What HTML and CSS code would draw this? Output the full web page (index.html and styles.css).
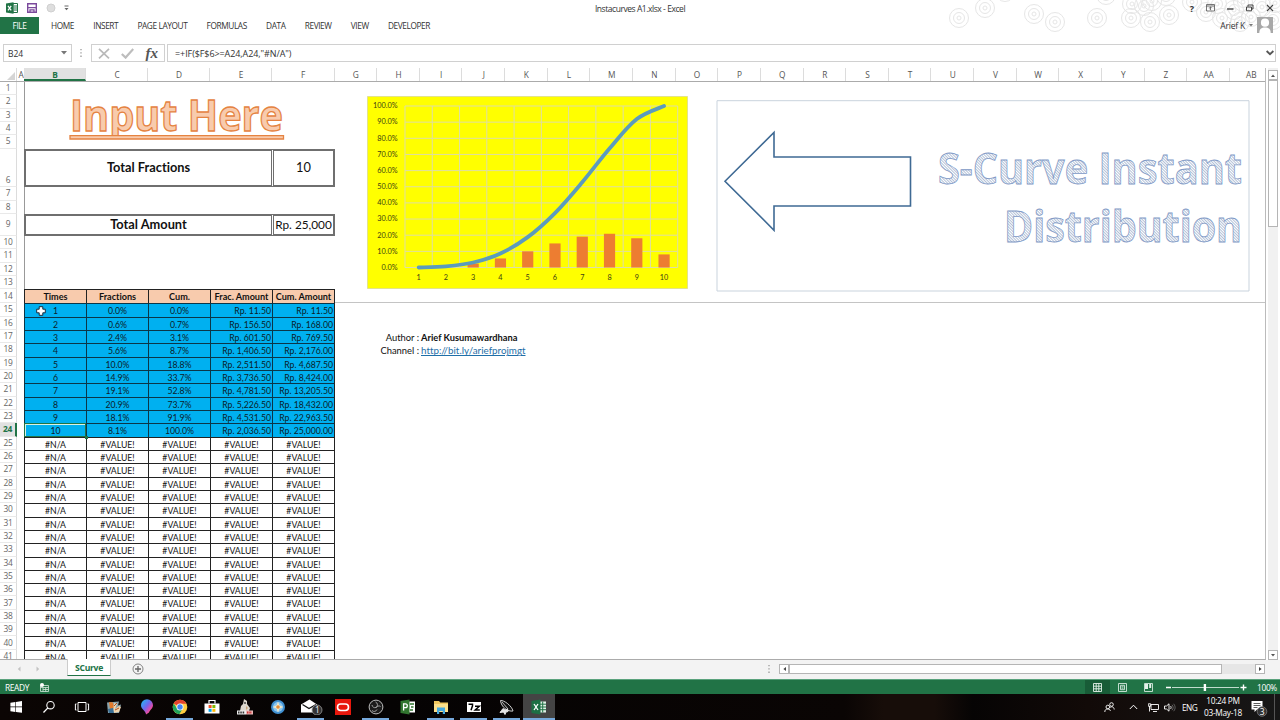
FILE: index.html
```html
<!DOCTYPE html>
<html lang="en">
<head>
    <meta charset="UTF-8">
    <title>Instacurves A1.xlsx - Excel</title>
    <link rel="stylesheet" href="styles.css">
</head>
<body>
<div class="excel">
    <svg class="rings" id="rings" width="340" height="44" viewBox="940 0 340 44"></svg>

    <div class="titlebar">
        <div class="quick">
            <svg width="12" height="12" viewBox="0 0 12 12"><path d="M7 1.5h4.5v9H7z" fill="#fff" stroke="#217346"/><path d="M8 4h3M8 6h3M8 8h3" stroke="#217346"/><path d="M0 1.5L7.5.3v11.4L0 10.5z" fill="#217346"/><path d="M2 3.8l3.2 4.6M5.2 3.8L2 8.4" stroke="#fff" stroke-width="1.2"/></svg>
            <svg width="10" height="10" viewBox="0 0 10 10"><path d="M.7.7h8.6v8.6H.7z" fill="#fff" stroke="#7b4a9c" stroke-width="1.4"/><path d="M.7 4.6h8.6M3 9V6.8h4V9" fill="none" stroke="#7b4a9c" stroke-width="1.3"/></svg>
            <svg width="10" height="10" viewBox="0 0 10 10"><circle cx="5" cy="5" r="4" fill="#dedede" stroke="#d0d0d0"/></svg>
            <svg width="5" height="6" viewBox="0 0 5 6"><path d="M.5 1h4" stroke="#666"/><path d="M.5 3h4L2.5 5.2z" fill="#666"/></svg>
        </div>
        <div class="title">Instacurves A1.xlsx - Excel</div>
        <div class="winbtns">
            <span class="help">?</span>
            <svg width="9" height="8" viewBox="0 0 9 8"><path d="M.5.5h8v6.5h-8zM.5 2h8M4.5 6V3M3.2 4.2l1.3-1.3 1.3 1.3" fill="none" stroke="#555" stroke-width=".8"/></svg>
            <svg width="7" height="8" viewBox="0 0 7 8"><path d="M0 5h6.5" stroke="#444" stroke-width="1.4"/></svg>
            <svg width="8" height="8" viewBox="0 0 8 8"><path d="M.5 3h5v3.8h-5zM2 2.6V1h5v4H6" fill="none" stroke="#444" stroke-width="1"/></svg>
            <svg width="8" height="8" viewBox="0 0 8 8"><path d="M1 1l6 6M7 1L1 7" stroke="#444" stroke-width="1.2"/></svg>
        </div>
    </div>

    <div class="ribbon">
        <span class="file">FILE</span>
        <span class="tab">HOME</span>
        <span class="tab">INSERT</span>
        <span class="tab">PAGE LAYOUT</span>
        <span class="tab">FORMULAS</span>
        <span class="tab">DATA</span>
        <span class="tab">REVIEW</span>
        <span class="tab">VIEW</span>
        <span class="tab">DEVELOPER</span>
        <div class="user">
            <span>Arief K</span>
            <svg width="4" height="3" viewBox="0 0 4 3"><path d="M0 0h4L2 2.5z" fill="#777"/></svg>
            <svg class="avatar" width="16" height="16" viewBox="0 0 16 16"><path d="M0 0h16v16H0z" fill="#a8a8a8"/><circle cx="8" cy="5.7" r="4.1" fill="#fff"/><path d="M2.3 16c0-4 2-5.6 5.7-5.6s5.7 1.6 5.7 5.6z" fill="#fff"/></svg>
        </div>
    </div>

    <div class="formulabar">
        <div class="namebox">B24<svg width="6" height="4" viewBox="0 0 6 4"><path d="M0 0h6L3 3.6z" fill="#777"/></svg></div>
        <svg class="dots" width="2" height="8" viewBox="0 0 2 8"><path d="M1 0v8" stroke="#999" stroke-width="1.3" stroke-dasharray="1.3 2"/></svg>
        <div class="fbtns">
            <svg width="12" height="11" viewBox="0 0 12 11"><path d="M1 .8l10 9.5M11 .8L1 10.3" stroke="#b9b9b9" stroke-width="1.7"/></svg>
            <svg width="13" height="11" viewBox="0 0 13 11"><path d="M.8 6l3.8 3.6L12.3 1" fill="none" stroke="#bdbdbd" stroke-width="2.2"/></svg>
            <span class="fx">fx</span>
        </div>
        <div class="formula"><span>=+IF($F$6&gt;=A24,A24,"#N/A")</span><svg width="8" height="6" viewBox="0 0 8 6"><path d="M.6 1L4 4.2 7.4 1" fill="none" stroke="#555" stroke-width="1.9"/></svg></div>
    </div>

    <div class="workarea">
        <div class="sheet">
            <div class="colheads" id="colheads"></div>
            <div class="cells" id="cells">
                <svg class="wordart" width="225" height="50" viewBox="65 94 225 50">
                    <clipPath id="above"><path d="M65 94h225v44H65z"/></clipPath>
                    <text x="70" y="131" textLength="213" lengthAdjust="spacingAndGlyphs" clip-path="url(#above)">Input Here</text>
                    <path d="M70 135.700h213.500v3.300H70z"/>
                </svg>
                <svg class="chart" id="chart" width="321" height="193" viewBox="367 96 321 193"></svg>
                <svg class="banner" width="534" height="192" viewBox="716 100 534 192">
                    <defs>
                        <pattern id="hatch" width="2" height="2" patternUnits="userSpaceOnUse" patternTransform="rotate(-45)">
                            <path d="M0 0h2v2H0z" fill="#fff"/>
                            <path d="M.5 0v2" stroke="#b4c2d8" stroke-width="1"/>
                        </pattern>
                    </defs>
                    <path d="M717 100.7h532V291H717z" fill="#fff" stroke="#c9d3dd"/>
                    <path d="M725 181.300L774 132.500V157H910.500V206H774V230.200z" fill="#fff" stroke="#3f6a94" stroke-width="1.6"/>
                    <text x="938" y="183.5" textLength="304" lengthAdjust="spacingAndGlyphs">S-Curve Instant</text>
                    <text x="1004" y="241.7" textLength="238" lengthAdjust="spacingAndGlyphs">Distribution</text>
                </svg>
                <svg class="cursor" width="10" height="10" viewBox="0 0 10 10"><path d="M3.200.7h3.600v2.500h2.500v3.600H6.800v2.500H3.200V6.800H.7V3.200h2.500z" fill="#fff" stroke="#1b2b3b" stroke-width="1"/></svg>
            </div>
        </div>
        <div class="vscroll">
            <div class="arrow"><svg width="4" height="3" viewBox="0 0 4 3"><path d="M0 3h4L2 .4z" fill="#555"/></svg></div>
            <div class="thumb"></div>
            <div class="arrow"><svg width="4" height="3" viewBox="0 0 4 3"><path d="M0 0h4L2 2.6z" fill="#555"/></svg></div>
        </div>
    </div>

    <div class="sheetbar">
        <svg class="nav" width="24" height="6" viewBox="0 0 24 6"><path d="M3.5.5L.8 3l2.700 2.500zM19.500.5L22.200 3l-2.700 2.500z" fill="#c3c3c3"/></svg>
        <span class="sheettab">SCurve</span>
        <svg class="add" width="12" height="12" viewBox="0 0 12 12"><circle cx="6" cy="6" r="5" fill="none" stroke="#777" stroke-width=".9"/><path d="M3 6h6M6 3v6" stroke="#666" stroke-width="1.3"/></svg>
        <svg class="dots" width="2" height="8" viewBox="0 0 2 8"><path d="M1 0v8" stroke="#999" stroke-width="1.3" stroke-dasharray="1.3 2"/></svg>
        <div class="hscroll">
            <div class="arrow"><svg width="3" height="4" viewBox="0 0 3 4"><path d="M3 0v4L.4 2z" fill="#444"/></svg></div>
            <div class="thumb"></div>
            <div class="arrow"><svg width="3" height="4" viewBox="0 0 3 4"><path d="M0 0v4l2.600-2z" fill="#444"/></svg></div>
        </div>
    </div>

    <div class="statusbar">
        <span class="ready">READY</span>
        <svg width="9" height="9" viewBox="0 0 9 9"><path d="M.5 2.5h8v6h-8zM.5 4.5h8M3 4.5v4M5.7 4.5v4M3 6.5h5.500" fill="none" stroke="#d6e8dd" stroke-width=".8"/><circle cx="2" cy="2" r="2" fill="#fff"/></svg>
        <div class="views">
            <span class="on"><svg width="9" height="9" viewBox="0 0 9 9"><path d="M.5.5h8v8h-8zM3.2.5v8M5.8.5v8M.5 3.2h8M.5 5.8h8" fill="none" stroke="#e4f0e9" stroke-width=".9"/></svg></span>
            <span><svg width="9" height="9" viewBox="0 0 9 9"><path d="M.5.5h8v8h-8zM2.5 2.3h4v4.400h-4zM3.500 3.800h2M3.500 5.200h2" fill="none" stroke="#d4e6dc" stroke-width=".9"/></svg></span>
            <span><svg width="9" height="9" viewBox="0 0 9 9"><path d="M.5.5h8v8h-8z" fill="none" stroke="#d4e6dc" stroke-width=".9"/><path d="M1 1h3v5H1zM5.2 1h2v4h-2z" fill="#e4f0e9"/></svg></span>
        </div>
        <svg class="zoom" width="82" height="9" viewBox="0 0 82 9"><path d="M0 4.5h5M74.5 4.5h6M77.5 1.5v6" stroke="#fff" stroke-width="1.4"/><path d="M6 4.5h67" stroke="#d4e6dc" stroke-width=".9"/><path d="M37.700 1h2.400v7h-2.400z" fill="#fff"/></svg>
        <span class="pct">100%</span>
    </div>
</div>

<div class="taskbar">
    <ul class="apps">
        <li><svg viewBox="0 0 16 16"><path d="M2.4 3.7l5-.7v4.600h-5zM8 2.900l6-.8v5.500H8zM2.400 8.300h5v4.600l-5-.7zM8 8.300h6v5.500l-6-.8z" fill="#fff"/></svg></li>
        <li><svg viewBox="0 0 16 16"><circle cx="9.5" cy="6.2" r="3.7" fill="none" stroke="#fff" stroke-width="1.1"/><path d="M6.9 8.900l-4.400 4.600" stroke="#fff" stroke-width="1.3"/></svg></li>
        <li><svg viewBox="0 0 16 16"><path d="M4 3.5h8v9H4zM2.500 5H1.400v6h1.100M13.500 5h1.100v6h-1.100" fill="none" stroke="#fff"/></svg></li>
        <li><svg viewBox="0 0 16 16"><path d="M1 3.5l12-1-1 4 3-1-2 8.500H2z" fill="#8aa4ad"/><path d="M3 3l4 .5 1 5.500-4 1z" fill="#e27a2c"/><path d="M8 4l3 1-2 5 4-3 2 1-2 5-6 1z" fill="#f0d5ae"/><path d="M2 10l5-1 1 5H3z" fill="#3a6f95"/><path d="M8 7l3-3M9 11l4-2" stroke="#b14b1c"/></svg></li>
        <li><svg viewBox="0 0 16 16"><defs><linearGradient id="balloon" x1="0" y1="0" x2="1" y2="1"><stop offset="0" stop-color="#18c5f4"/><stop offset=".45" stop-color="#6e67ee"/><stop offset=".7" stop-color="#e04ba8"/><stop offset="1" stop-color="#ffa23e"/></linearGradient></defs><path d="M8 .3a6 6 0 0 1 6 6c0 3-3 4.600-4 7.200L7 15.500C7 12 2 10.500 2 6.300a6 6 0 0 1 6-6z" fill="url(#balloon)"/></svg></li>
        <li class="open"><svg viewBox="0 0 16 16"><circle cx="8" cy="8" r="7.3" fill="#ffcd40"/><path d="M8 8L1.7 4.400A7.300 7.300 0 0 1 14.400 4.700H8z" fill="#e3412f"/><path d="M1.7 4.400A7.300 7.300 0 0 0 7.300 15.300L10.800 9.600 5.100 9.600z" fill="#20a35b"/><circle cx="8" cy="8" r="3.5" fill="#fff"/><circle cx="8" cy="8" r="2.7" fill="#4487f3"/></svg></li>
        <li><svg viewBox="0 0 16 16"><path d="M.5 4.5h15v10H.5z" fill="#fff"/><path d="M5 4.5V1.5h6v3" fill="none" stroke="#fff" stroke-width="1.2"/><path d="M4.6 6h3v3h-3z" fill="#f25022"/><path d="M8.4 6h3v3h-3z" fill="#7fba00"/><path d="M4.6 9.800h3v3h-3z" fill="#00a4ef"/><path d="M8.4 9.800h3v3h-3z" fill="#ffb900"/></svg></li>
        <li><svg viewBox="0 0 16 16"><path d="M7 0l3 2v3l3 4-1 3H3l1-5 2-2z" fill="#ddd8cf"/><circle cx="8" cy="4" r="1" fill="#444"/><path d="M9 7l2 2-2 2z" fill="#c9a37a"/><path d="M0 11.5h9v4H0z" fill="#eee"/><path d="M9 11.5h7v4H9z" fill="#e9b9b9"/><path d="M1 13.5h7" stroke="#333" stroke-dasharray="1.5 .8" stroke-width="2"/><path d="M10 13.5h5" stroke="#c33" stroke-dasharray="1.5 .8" stroke-width="2"/></svg></li>
        <li><svg viewBox="0 0 16 16"><circle cx="8" cy="8" r="7" fill="#3f8fd0"/><circle cx="8" cy="8" r="5" fill="#8cc6ee"/><path d="M8 2.5l1.300 3.700 4 1.800-4 1.800L8 13.500 6.700 9.800l-4-1.800 4-1.800z" fill="#f4e7c3"/><circle cx="8" cy="8" r="1.8" fill="#e08a3a"/></svg></li>
        <li class="open"><svg class="mail" viewBox="0 0 22 16"><path d="M0 5.5L8.500.5 16 5.500v8H0z" fill="#fff"/><path d="M1.5 5.500L8 9.500l7-4" fill="none" stroke="#111" stroke-width="1.3"/><circle cx="16" cy="11" r="5" fill="#333" stroke="#999" stroke-width=".8"/><text x="14" y="14" class="badge">1</text></svg></li>
        <li><svg viewBox="0 0 16 16"><path d="M0 0h16v16H0z" fill="#e8170c"/><rect x="2.5" y="5" width="11" height="6.5" rx="3.2" fill="none" stroke="#fff" stroke-width="1.6"/></svg></li>
        <li class="open"><svg viewBox="0 0 16 16"><circle cx="8" cy="8" r="6.9" fill="#1c1c1c" stroke="#bbb"/><path d="M7.5 3a3 3 0 0 1 1 5M12.600 7.500a3 3 0 0 0-4.600 1.500M4 11.500a3 3 0 0 0 5-1M4 6a3 3 0 0 0 4 2.500" fill="none" stroke="#aaa" stroke-width=".9"/></svg></li>
        <li><svg viewBox="0 0 16 16"><path d="M8 2.5h7v11H8z" fill="#fff"/><path d="M10 5h4M11 8h2.500M10 11h3" stroke="#31752f" stroke-width="1.3"/><path d="M.5 2L9.500.6v14.800L.5 14z" fill="#31752f"/><path d="M3.6 11.500V4.800h1.800a1.900 1.900 0 0 1 0 3.800H3.600" fill="none" stroke="#fff" stroke-width="1.3"/></svg></li>
        <li class="open"><svg viewBox="0 0 16 16"><path d="M1 2h5l1.300 1.500H15V13H1z" fill="#f0c75e"/><path d="M1 5h14v8H1z" fill="#fbe08c"/><path d="M4 8.500h8V15H9.800v-3H6.200v3H4z" fill="#45a9e0"/></svg></li>
        <li class="open"><svg viewBox="0 0 16 16"><path d="M1 3h14v10H1z" fill="#fff"/><path d="M2.5 5.300h4v1.500L5 11.300M9 7.300h4.300L9.200 11h4.600" fill="none" stroke="#000" stroke-width="1.5"/></svg></li>
        <li class="open"><svg viewBox="0 0 16 16"><path d="M2.5 1.500C6 1 14 7 15 12c-5 1-12-4-12.500-10.500z" fill="#111" stroke="#ccc"/><path d="M4 3l6 7" stroke="#bbb"/><path d="M5 9.500l2 1.500 2.500-1 .5 2.500-2 .5L7 15.500 5.500 13 2 13.500l1.500-2z" fill="#e6e6e6" stroke="#e6e6e6"/></svg></li>
        <li class="open active"><svg viewBox="0 0 16 16"><path d="M8 2.500h7v11H8z" fill="#dff0e6"/><path d="M8 5.200h7M8 8h7M8 10.700h7M11.700 2.500v11" stroke="#217346"/><path d="M.5 2L9.500.6v14.800L.5 14z" fill="#1d7044"/><path d="M3 5l4 6M7 5l-4 6" stroke="#fff" stroke-width="1.3"/></svg></li>
    </ul>
    <div class="tray">
        <svg width="11" height="11" viewBox="0 0 11 11"><circle cx="7.5" cy="2.5" r="1.8" fill="none" stroke="#fff" stroke-width=".9"/><circle cx="3.8" cy="5" r="1.8" fill="none" stroke="#fff" stroke-width=".9"/><path d="M.8 10c0-2 1-3 3-3s2.500 1 2.500 2M6 5.500c2-1.500 4-.5 4.200 2" fill="none" stroke="#fff" stroke-width=".9"/></svg>
        <svg class="up" width="9" height="6" viewBox="0 0 9 6"><path d="M.8 5L4.500 1.200 8.200 5" fill="none" stroke="#fff"/></svg>
        <svg width="11" height="9" viewBox="0 0 11 9"><path d="M3 1.500h7.500v5H3zM5 8.500h4M1.500 3v5.500M.3.8h2.400v2.400H.3z" fill="none" stroke="#fff" stroke-width=".9"/></svg>
        <svg class="sound" width="12" height="9" viewBox="0 0 12 9"><path d="M.5 3h2L5 .8v7.400L2.500 6h-2z" fill="none" stroke="#fff" stroke-width=".9"/><path d="M6.500 3c.8 1 .8 2 0 3" fill="none" stroke="#fff" stroke-width=".9"/><path d="M8 1.800c1.500 1.800 1.500 3.600 0 5.400M9.600.8c2 2.500 2 4.900 0 7.400" fill="none" stroke="#777" stroke-width=".8"/></svg>
        <span class="lang">ENG</span>
        <div class="clock">10:24 PM<br>03-May-18</div>
        <svg class="notes" width="17" height="17" viewBox="0 0 17 17"><path d="M.5 1h11v8.500H6L3.500 12V9.500h-3z" fill="#fff"/><path d="M2.5 3.500h7M2.500 5.500h7M2.500 7.500h4" stroke="#333" stroke-width=".8"/><circle cx="11" cy="11.500" r="4.800" fill="#333" stroke="#888" stroke-width=".7"/><text x="8.800" y="14.500" class="badge">3</text></svg>
    </div>
</div>
<script src="script.js"></script>
</body>
</html>
```
FILE: styles.css
```css
* {
    padding: 0;
    margin: 0;
    box-sizing: border-box;
    list-style: none;
}

body {
    width: 1280px;
    height: 720px;
    overflow: hidden;
    display: flex;
    flex-direction: column;
    background: #fff;
    font-family: "Open Sans", "Noto Sans", sans-serif;
    font-size: 8.5px;
    font-variant-ligatures: none;
    color: #333;
}

svg {
    display: block;
    flex: none;
}

.excel {
    position: relative;
    height: 694px;
    display: flex;
    flex-direction: column;
}

.rings {
    position: absolute;
    right: 0;
    top: 0;
}

.rings circle {
    fill: none;
    stroke: #e6e6e6;
}

/* title bar */
.titlebar {
    position: relative;
    height: 16px;
    display: grid;
    grid-template-columns: 1fr auto 1fr;
    align-items: center;
}

.quick {
    display: flex;
    align-items: center;
    gap: 9px;
    padding-left: 6px;
}

.quick svg:last-child {
    margin-left: -1px;
}

.title {
    font-size: 8.5px;
    letter-spacing: -0.45px;
    white-space: nowrap;
}

.winbtns {
    display: flex;
    justify-content: flex-end;
    align-items: center;
    gap: 12px;
    padding-right: 6px;
}

.help {
    font-weight: bold;
    font-size: 9px;
}

/* ribbon */
.ribbon {
    position: relative;
    height: 18px;
    display: flex;
    align-items: center;
    font-size: 8.3px;
    letter-spacing: -0.4px;
}

.file {
    width: 39px;
    height: 17px;
    line-height: 17px;
    text-align: center;
    background: #217346;
    color: #fff;
    margin-right: 12px;
}

.tab {
    margin-right: 19.2px;
}

.user {
    margin-left: auto;
    display: flex;
    align-items: center;
    gap: 4px;
    padding-right: 7px;
    font-size: 8.5px;
    letter-spacing: -0.2px;
}

/* formula bar */
.formulabar {
    height: 34px;
    padding: 10px 4px 6px 3px;
    display: flex;
    align-items: center;
    background: #fff;
}

.namebox,
.fbtns,
.formula {
    height: 18px;
    border: 1px solid #d0d0d0;
    display: flex;
    align-items: center;
    background: #fff;
}

.namebox {
    width: 69px;
    padding: 0 4px;
    justify-content: space-between;
    font-size: 8.5px;
}

.formulabar .dots {
    margin: 0 9px 0 8px;
}

.fbtns {
    width: 74px;
    padding: 0 6px;
    justify-content: space-between;
}

.fx {
    font-family: "Liberation Serif", serif;
    font-style: italic;
    font-weight: bold;
    font-size: 15px;
    line-height: 16px;
    color: #555;
}

.formula {
    flex: 1;
    margin-left: 2px;
    padding: 0 1px 0 7px;
    justify-content: space-between;
    font-size: 9px;
    letter-spacing: -0.08px;
}

/* sheet */
.workarea {
    height: 592px;
    display: flex;
}

.sheet {
    width: 1266px;
    overflow: hidden;
    border-right: 1px solid #bbb;
    border-bottom: 1px solid #ababab;
}

.colheads {
    height: 14px;
    display: flex;
    border-bottom: 1px solid #ababab;
    line-height: 14px;
    text-align: center;
    color: #555;
    font-size: 8.3px;
}

.colheads div {
    flex: none;
    width: 42.65px;
    padding-left: 1px;
    border-right: 1px solid #dcdcdc;
}

.colheads .corner {
    width: 17px;
    padding: 4px 0 0 7px;
}

.colheads .a {
    width: 7px;
    border: 0;
}

.colheads .wide {
    width: 62px;
}

.colheads .f {
    width: 62.5px;
}

.colheads .on {
    background: #e1e1e1;
    color: #217346;
    font-weight: bold;
    border-bottom: 2px solid #217346;
}

.cells {
    position: relative;
    font-family: Lato, "Open Sans", sans-serif;
    font-size: 8.7px;
    color: #111;
}

.row {
    height: 13.333px;
    line-height: 13px;
    display: flex;
    white-space: nowrap;
}

.row > div {
    flex: none;
    width: 62px;
}

.row > .rowhead {
    width: 17px;
    line-height: 12.2px;
    font-family: "Open Sans", sans-serif;
    font-size: 8.4px;
    letter-spacing: -0.2px;
    color: #666;
    border-right: 1px solid #dcdcdc;
    border-bottom: 1px solid #e9e9e9;
    display: flex;
    align-items: flex-end;
    justify-content: center;
}

.row > .a {
    width: 7px;
}

.row.frozen > .a {
    width: 8px;
    border-right: 1px solid #999;
}

.row.r6 {
    height: 38.667px;
}

.row.r9 {
    height: 22px;
}

.row.r14 {
    height: 14px;
}

.row.r9 .rowhead {
    align-items: center;
}

.row > .label,
.row > .input {
    display: flex;
    align-items: center;
    justify-content: center;
    border: 2px solid #6f6f6f;
}

.row > .label {
    width: 250px;
    margin-left: -1px;
    border-right: 3px double #6f6f6f;
    font-weight: bold;
    font-size: 12.8px;
}

.row > .input {
    width: 61px;
    border-left: 0;
    font-size: 12.8px;
}

.r9 > .input {
    font-size: 11.8px;
}

.row > .cell {
    border-left: 1px solid #222;
    border-top: 1px solid #222;
    text-align: center;
}

.row > .cell.last {
    width: 63px;
    border-right: 1px solid #222;
}

.r14 > .cell {
    background: #f8cbad;
    font-weight: bold;
    font-size: 9.1px;
}

.filled > .cell {
    background: #00b0f0;
    border-color: #0b3648;
    color: #0c2029;
}

.filled > .money {
    text-align: right;
    padding-right: 1px;
}

.row.r24 > .rowhead {
    background: #e1e1e1;
    color: #217346;
    font-weight: bold;
    border-right: 2px solid #217346;
}

.r24 > .cell:nth-child(3) {
    position: relative;
    box-shadow: inset 0 0 0 1px #d8f2e4;
    outline: 1px solid #217346;
    outline-offset: -1px;
}

.r24 > .cell:nth-child(3)::after {
    content: "";
    position: absolute;
    right: -2px;
    bottom: -2px;
    width: 3px;
    height: 3px;
    background: #217346;
}

.row.r14::after {
    content: "";
    flex: 1;
    border-bottom: 1px solid #c4c4c4;
}

.row > .who {
    width: 84px;
    text-align: right;
    font-size: 9.4px;
    line-height: 15px;
}

.row > .value {
    width: auto;
    margin-left: 2px;
    font-weight: bold;
    font-size: 9.3px;
    line-height: 15px;
}

.row > .link {
    font-weight: normal;
    font-size: 9.8px;
    text-decoration: underline;
    color: #1f6fa8;
}

/* drawings floating over the cells */
.wordart {
    position: absolute;
    left: 65px;
    top: 12px;
}

.wordart text,
.banner text {
    font: bold 43px "Open Sans", sans-serif;
}

.wordart text,
.wordart path {
    fill: #f8cbad;
    stroke: #e58341;
    stroke-width: 1.3;
}

.chart {
    position: absolute;
    left: 367px;
    top: 14px;
}

.chart text {
    font-size: 7.3px;
    fill: #3c3c14;
}

.banner {
    position: absolute;
    left: 716px;
    top: 18px;
}

.banner text {
    fill: url(#hatch);
    stroke: #8099c6;
    stroke-width: 0.8;
}

.cursor {
    position: absolute;
    left: 36px;
    top: 224px;
}

/* scrollbars */
.vscroll {
    width: 10px;
    margin-left: 2px;
    padding-top: 2px;
    display: flex;
    flex-direction: column;
    background: #f1f1f1;
}

.arrow {
    width: 10px;
    height: 10px;
    flex: none;
    border: 1px solid #b5b5b5;
    background: #fff;
    display: flex;
    align-items: center;
    justify-content: center;
}

.thumb {
    border: 1px solid #b5b5b5;
    background: #fff;
}

.vscroll .thumb {
    height: 147px;
    margin-bottom: auto;
}

.sheetbar {
    height: 19px;
    display: flex;
    background: #f3f3f3;
}

.nav {
    margin: 6px 0 0 17px;
}

.sheettab {
    position: relative;
    width: 44px;
    height: 17px;
    margin: -1px 0 0 26px;
    line-height: 19px;
    text-align: center;
    background: #fff;
    border-bottom: 1px solid #217346;
    border-left: 1px solid #ccc;
    border-right: 1px solid #ccc;
    font-weight: bold;
    font-size: 8.6px;
    letter-spacing: -0.3px;
    color: #217346;
}

.add {
    margin: 3px 0 0 21px;
}

.sheetbar .dots {
    margin: 5px 9px 0 auto;
}

.hscroll {
    width: 486px;
    height: 10px;
    margin: 4px 15px 0 0;
    display: flex;
    background: #e6e6e6;
}

.hscroll .thumb {
    width: 433px;
    margin-right: auto;
}

/* status bar */
.statusbar {
    height: 15px;
    padding: 0 5px;
    display: flex;
    align-items: center;
    background: #217346;
    border-top: 1px solid #5aa27c;
    color: #fff;
    font-size: 8.4px;
    letter-spacing: -0.35px;
}

.ready {
    width: 35px;
}

.views {
    margin-left: auto;
    display: flex;
}

.views span {
    width: 25.5px;
    height: 14px;
    display: flex;
    align-items: center;
    justify-content: center;
}

.views .on {
    background: #185c37;
}

.zoom {
    margin: 0 9px 0 5px;
}

.pct {
    width: 18px;
}

/* taskbar */
.taskbar {
    height: 26px;
    display: flex;
    justify-content: space-between;
    color: #fff;
    background: linear-gradient(90deg, #0b0504, #050303 30%, #0a0504 66%, #170d09 69%, #170d09 73%, #060404 76%, #120a08 85%, #171717);
}

.apps {
    display: flex;
}

.apps li {
    width: 32.66px;
    height: 26px;
    padding-top: 4.5px;
    display: flex;
    justify-content: center;
}

.apps svg {
    width: 16px;
    height: 16px;
}

.apps .mail {
    width: 22px;
    margin-left: 3px;
}

.apps .open {
    background: linear-gradient(#76a9dc, #76a9dc) center bottom / 27px 2px no-repeat;
}

.apps .active {
    background: linear-gradient(#76a9dc, #76a9dc) center bottom / 32px 2px no-repeat #444;
}

.badge {
    font: 8.4px "Open Sans", sans-serif;
    fill: #fff;
}

.tray {
    display: flex;
    align-items: center;
    padding-right: 5px;
}

.tray .up {
    margin: 0 10px 0 14px;
}

.tray .sound {
    margin-left: 5px;
}

.lang {
    width: 15px;
    margin-left: 6px;
    font-size: 8.3px;
    letter-spacing: -0.5px;
}

.clock {
    width: 46px;
    margin-left: 3px;
    text-align: center;
    font-size: 8.3px;
    line-height: 12px;
    letter-spacing: -0.3px;
    white-space: nowrap;
}

.notes {
    margin: 2px 6px 0 5px;
}

.tray::after {
    content: "";
    width: 1px;
    height: 26px;
    background: #555;
}
```
FILE: script.js
```js
// column headers
var colheads = document.getElementById('colheads');
var cols = ['', 'A', 'B', 'C', 'D', 'E', 'F', 'G', 'H', 'I', 'J', 'K', 'L', 'M', 'N', 'O', 'P', 'Q', 'R', 'S', 'T', 'U', 'V', 'W', 'X', 'Y', 'Z', 'AA', 'AB'];
for (var i = 0; i < cols.length; i++) {
    var head = document.createElement('div');
    head.innerText = cols[i];
    if (i == 0) {
        head.className = 'corner';
        head.innerHTML = '<svg width="8" height="8" viewBox="0 0 8 8"><path d="M8 0v8H0z" fill="#d5d5d5"/></svg>';
    } else if (i == 1) {
        head.className = 'a';
    } else if (i == 6) {
        head.className = 'f';
    } else if (i < 6) {
        head.className = i == 2 ? 'wide on' : 'wide';
    }
    colheads.appendChild(head);
}

// rows
var data = [
    ['1', '0.0%', '0.0%', 'Rp. 11.50', 'Rp. 11.50'],
    ['2', '0.6%', '0.7%', 'Rp. 156.50', 'Rp. 168.00'],
    ['3', '2.4%', '3.1%', 'Rp. 601.50', 'Rp. 769.50'],
    ['4', '5.6%', '8.7%', 'Rp. 1,406.50', 'Rp. 2,176.00'],
    ['5', '10.0%', '18.8%', 'Rp. 2,511.50', 'Rp. 4,687.50'],
    ['6', '14.9%', '33.7%', 'Rp. 3,736.50', 'Rp. 8,424.00'],
    ['7', '19.1%', '52.8%', 'Rp. 4,781.50', 'Rp. 13,205.50'],
    ['8', '20.9%', '73.7%', 'Rp. 5,226.50', 'Rp. 18,432.00'],
    ['9', '18.1%', '91.9%', 'Rp. 4,531.50', 'Rp. 22,963.50'],
    ['10', '8.1%', '100.0%', 'Rp. 2,036.50', 'Rp. 25,000.00']
];
var titles = ['Times', 'Fractions', 'Cum.', 'Frac. Amount', 'Cum. Amount'];
var empty = ['#N/A', '#VALUE!', '#VALUE!', '#VALUE!', '#VALUE!'];

function cellsHtml(values) {
    var html = '';
    for (var i = 0; i < values.length; i++) {
        var cls = 'cell';
        if (i > 2) cls += ' money';
        if (i == 4) cls += ' last';
        html += '<div class="' + cls + '">' + values[i] + '</div>';
    }
    return html;
}

var cells = document.getElementById('cells');
var rows = '';
for (var r = 1; r <= 41; r++) {
    var cls = 'row r' + r;
    var html = '<div class="rowhead">' + r + '</div><div class="a"></div>';
    if (r < 14) cls += ' frozen';
    if (r == 6) html += '<div class="label">Total Fractions</div><div class="input">10</div>';
    if (r == 9) html += '<div class="label">Total Amount</div><div class="input">Rp. 25,000</div>';
    if (r == 14) html += cellsHtml(titles);
    if (r > 14 && r < 25) {
        cls += ' filled';
        html += cellsHtml(data[r - 15]);
    }
    if (r > 24) html += cellsHtml(empty);
    if (r == 17) html += '<div class="who">Author :</div><div class="value">Arief Kusumawardhana</div>';
    if (r == 18) html += '<div class="who">Channel :</div><div class="value link">http://bit.ly/ariefprojmgt</div>';
    rows += '<div class="' + cls + '">' + html + '</div>';
}
cells.insertAdjacentHTML('afterbegin', rows);

// chart
var left = 405, right = 677.7, top0 = 106, bottom = 267.5;
var step = (right - left) / 10;
var svg = '<path d="M367.5 96.5h320v192h-320z" fill="#ff0" stroke="#e3e38a"/>';
for (var i = 0; i <= 10; i++) {
    var y = bottom - (bottom - top0) * i / 10;
    var x = left + step * i;
    svg += '<path d="M' + left + ' ' + y + 'H' + right + 'M' + x + ' ' + top0 + 'V' + bottom + '" stroke="#dedea4"/>';
    svg += '<text x="397.5" y="' + (y + 2.3) + '" text-anchor="end">' + (i * 10) + '.0%</text>';
}
var pts = [];
for (var i = 0; i < 10; i++) {
    var cx = left + step * (i + 0.5);
    var h = parseFloat(data[i][1]) * (bottom - top0) / 100;
    pts.push([cx, bottom - parseFloat(data[i][2]) * (bottom - top0) / 100]);
    if (i > 1) svg += '<rect x="' + (cx - 5.6) + '" y="' + (bottom - h) + '" width="11.2" height="' + h + '" fill="#ed7d31"/>';
    svg += '<text x="' + cx + '" y="280" text-anchor="middle">' + (i + 1) + '</text>';
}
// smoothed line through the cumulative values
var d = 'M' + pts[0];
for (var i = 0; i < 9; i++) {
    var p0 = pts[i - 1] || pts[i], p1 = pts[i], p2 = pts[i + 1], p3 = pts[i + 2] || p2;
    d += 'C' + [p1[0] + (p2[0] - p0[0]) / 6, p1[1] + (p2[1] - p0[1]) / 6, p2[0] - (p3[0] - p1[0]) / 6, p2[1] - (p3[1] - p1[1]) / 6, p2[0], p2[1]];
}
svg += '<path d="' + d + '" fill="none" stroke="#5b9bbd" stroke-width="3.8" stroke-linecap="round"/>';
document.getElementById('chart').innerHTML = svg;

// title bar background rings
var spots = [[959, 18], [985, 8], [1005, -8], [1034, 14], [1055, 22], [1097, 18], [1106, -5], [1131, 18], [1132, 4], [1150, 22], [1152, 1], [1144, 6], [1169, 15], [1166, -4], [1192, 2], [1206, 12], [1217, 4], [1222, 18], [1234, 10], [1243, 2], [1251, 17], [1262, 7], [1273, 20], [1275, 3], [1240, 22]];
var rings = '';
for (var i = 0; i < spots.length; i++) {
    for (var k = 0; k < 3; k++) {
        rings += '<circle cx="' + spots[i][0] + '" cy="' + spots[i][1] + '" r="' + [2, 5.5, 9.5][k] + '"/>';
    }
}
document.getElementById('rings').innerHTML = rings;
```
